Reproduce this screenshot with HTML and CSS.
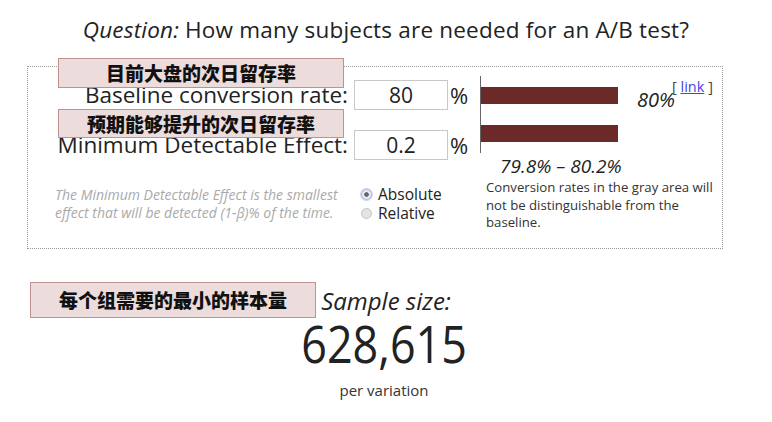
FILE: index.html
```html
<!DOCTYPE html>
<html>
<head>
<meta charset="utf-8">
<link rel="stylesheet" href="styles.css">
</head>
<body>
<h1 class="title"><em>Question:</em> How many subjects are needed for an A/B test?</h1>
<div class="panel">
  <div class="note-tag tag-1">目前大盘的次日留存率</div>
  <div class="note-tag tag-2">预期能够提升的次日留存率</div>
  <div class="form">
    <div class="row">
      <label class="row-label">Baseline conversion rate:</label>
      <div class="field">80</div>
      <span class="pct">%</span>
    </div>
    <div class="row">
      <label class="row-label">Minimum Detectable Effect:</label>
      <div class="field">0.2</div>
      <span class="pct">%</span>
    </div>
    <div class="options">
      <p class="hint">The Minimum Detectable Effect is the smallest<br>effect that will be detected (1-β)% of the time.</p>
      <div class="radios">
        <div class="radio-row"><span class="radio checked"></span>Absolute</div>
        <div class="radio-row"><span class="radio"></span>Relative</div>
      </div>
    </div>
  </div>
  <div class="chart">
    <div class="bars">
      <div class="bar bar-1"></div>
      <div class="bar bar-2"></div>
      <span class="bar-value">80%</span>
      <span class="link-wrap">[ <a href="#">link</a> ]</span>
    </div>
    <div class="range">79.8% – 80.2%</div>
    <p class="desc">Conversion rates in the gray area will not be distinguishable from the baseline.</p>
  </div>
</div>
<div class="result">
  <div class="note-tag tag-3">每个组需要的最小的样本量</div>
  <div class="result-inner">
    <div class="sample-label">Sample size:</div>
    <div class="sample-value">628,615</div>
    <div class="per">per variation</div>
  </div>
</div>
</body>
</html>
```

FILE: styles.css
```css
html, body {
  margin: 0;
  padding: 0;
  background: #fff;
}
body {
  width: 772px;
  height: 422px;
  overflow: hidden;
  font-family: "Open Sans", "Noto Sans", "Noto Sans CJK SC", sans-serif;
  color: #222;
}
.title {
  margin: 15px 0 0 0;
  height: 30px;
  font-size: 22.5px;
  font-weight: normal;
  text-align: center;
  letter-spacing: 0.2px;
  line-height: 30px;
}
.title em {
  font-style: italic;
}
.panel {
  position: relative;
  margin: 21px 0 0 27px;
  width: 694px;
  height: 181px;
  border: 1px dotted #999;
  display: flex;
}
.note-tag {
  position: absolute;
  box-sizing: border-box;
  background: #ecdcdc;
  border: 1px solid #c48f8f;
  font-family: "Noto Sans CJK SC", sans-serif;
  font-weight: 900;
  font-size: 19px;
  color: #111;
  text-align: center;
  line-height: 27px;
}
.tag-1 {
  left: 30px;
  top: -9px;
  width: 286px;
  height: 30px;
}
.tag-2 {
  left: 30px;
  top: 42px;
  width: 286px;
  height: 29px;
}
.form {
  width: 451px;
  padding-top: 13px;
}
.row {
  display: flex;
  align-items: center;
  height: 30px;
}
.row + .row {
  margin-top: 20px;
}
.row-label {
  width: 320px;
  text-align: right;
  padding-right: 6px;
  font-size: 22.5px;
  line-height: 30px;
  white-space: nowrap;
}
.field {
  box-sizing: border-box;
  width: 94px;
  height: 30px;
  border: 1px solid #c8c8c8;
  text-align: center;
  font-size: 21px;
  line-height: 28px;
}
.pct {
  margin-left: 2px;
  font-size: 22px;
}
.options {
  display: flex;
  margin-top: 25px;
  padding-left: 27px;
}
.hint {
  margin: 1px 0 0 0;
  width: 300px;
  font-size: 14px;
  line-height: 18px;
  font-style: italic;
  color: #aaa;
  white-space: nowrap;
}
.radios {
  margin-left: 6px;
  font-size: 15.5px;
  line-height: 19px;
}
.radio-row {
  display: flex;
  align-items: center;
}
.radio {
  box-sizing: border-box;
  width: 11px;
  height: 11px;
  border-radius: 50%;
  border: 1px solid #c4c4c4;
  background: #e4e4e4;
  margin-right: 6px;
}
.radio.checked {
  border: 1px solid #a9b6e6;
  background: radial-gradient(circle, #666 0 2px, #e8eaf3 2.5px);
  box-shadow: 0 0 0 1px #c8d0f0;
}
.chart {
  flex: 1;
  padding-top: 9px;
  margin-left: 2px;
}
.bars {
  position: relative;
  height: 77px;
  border-left: 1px solid #666;
  box-sizing: border-box;
  padding-top: 11px;
}
.bar {
  width: 137px;
  height: 17px;
  background: #6b2a27;
}
.bar-2 {
  margin-top: 21px;
}
.bar-value {
  position: absolute;
  left: 156px;
  top: 10px;
  font-size: 20px;
  font-style: italic;
  color: #222;
}
.link-wrap {
  position: absolute;
  left: 191px;
  top: 1px;
  font-size: 14.5px;
  color: #444;
}
.link-wrap a {
  color: #4444ee;
}
.range {
  margin: 0 0 0 20px;
  font-size: 19px;
  font-style: italic;
  line-height: 26px;
}
.desc {
  margin: 0 0 0 6px;
  width: 236px;
  font-size: 13.2px;
  line-height: 17.5px;
  color: #333;
}
.result {
  position: relative;
  height: 170px;
}
.tag-3 {
  left: 30px;
  top: 33px;
  width: 286px;
  height: 36px;
  line-height: 34px;
}
.result-inner {
  display: flex;
  flex-direction: column;
  align-items: center;
  padding: 37px 0 0 0;
  margin-left: 2px;
  width: 764px;
}
.sample-label {
  margin-left: 4px;
  font-size: 24px;
  font-style: italic;
  line-height: 30px;
}
.sample-value {
  font-size: 51px;
  line-height: 54px;
  transform: scaleX(0.88);
}
.per {
  margin-top: 10px;
  font-size: 15px;
  color: #333;
}
```
